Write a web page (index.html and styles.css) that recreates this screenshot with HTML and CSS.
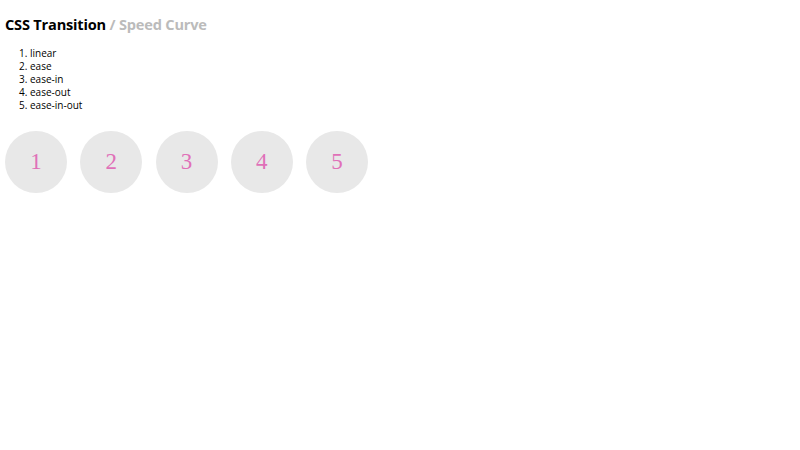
FILE: index.html
```html
<!DOCTYPE html>
<html>
<head>
<meta charset="utf-8">
<link rel="stylesheet" href="styles.css">
</head>
<body>
<h1 class="title">CSS Transition <span class="sub">/ Speed Curve</span></h1>
<ol class="curves">
  <li>linear</li>
  <li>ease</li>
  <li>ease-in</li>
  <li>ease-out</li>
  <li>ease-in-out</li>
</ol>
<div class="balls">
  <div class="ball">1</div>
  <div class="ball">2</div>
  <div class="ball">3</div>
  <div class="ball">4</div>
  <div class="ball">5</div>
</div>
</body>
</html>
```
FILE: styles.css
```css
body {
  margin: 0;
  padding: 0 5px;
  font-family: "Open Sans", "Noto Sans", sans-serif;
  color: #000;
  background: #fff;
}
.title {
  margin: 14px 0 0;
  font-size: 14.6px;
  font-weight: 700;
  line-height: 20px;
  letter-spacing: -0.2px;
}
.sub {
  color: #bbb;
}
.curves {
  margin: 13px 0 0;
  padding-left: 25px;
  font-size: 10px;
  line-height: 13px;
}
.balls {
  display: flex;
  gap: 13.25px;
  margin-top: 19px;
}
.ball {
  width: 62px;
  height: 62px;
  border-radius: 50%;
  background: #e8e8e8;
  color: #e070b8;
  font-family: "Liberation Serif", serif;
  font-size: 23px;
  display: flex;
  align-items: center;
  justify-content: center;
}
```
